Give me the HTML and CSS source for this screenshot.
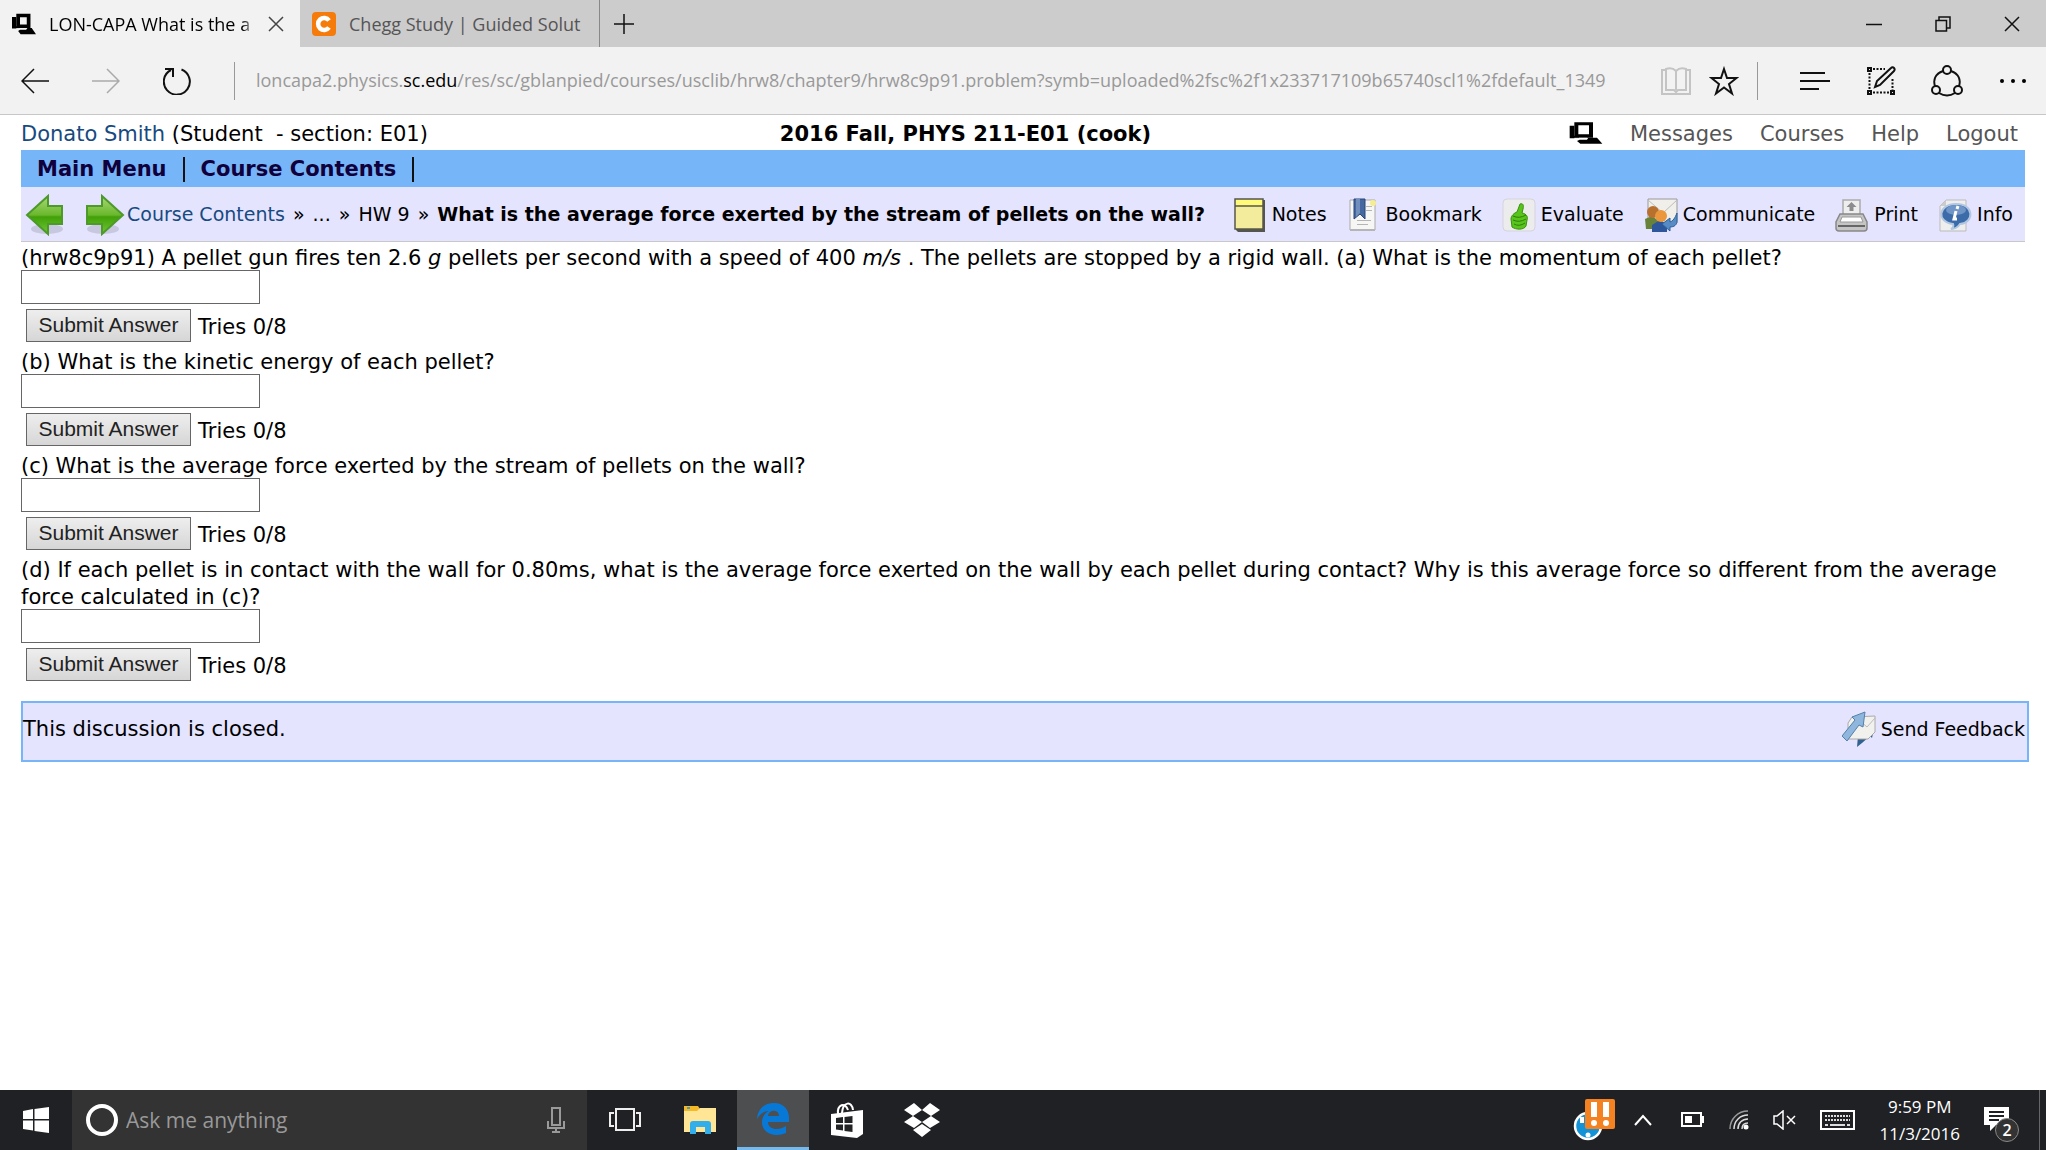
FILE: index.html
```html
<!DOCTYPE html>
<html lang="en">
<head>
<meta charset="utf-8">
<title>LON-CAPA What is the average force exerted by the stream of pellets on the wall?</title>
<link rel="stylesheet" href="styles.css">
</head>
<body>
<header class="browser">
  <div class="tabs">
    <div class="tab tab-active">
      <svg class="tab-icon" viewBox="0 0 78 70"><path fill="#000" fill-rule="evenodd" d="M14 2h46v46H14zM26 13h22v24H26z"/><path fill="#000" d="M0 12h14v30h10v8H0zM20 58l6-4h20l4-6h14l14 20H28z"/><path stroke="#f2f2f2" stroke-width="3" d="M14 50h32"/></svg>
      <span class="tab-title fade">LON-CAPA What is the a</span>
      <button class="bare" aria-label="Close tab"><svg width="16" height="16" viewBox="0 0 16 16"><path class="line thin" d="M1 1l14 14M15 1L1 15"/></svg></button>
    </div>
    <div class="tab tab-idle">
      <svg class="tab-icon" viewBox="0 0 24 24"><rect width="24" height="24" rx="4" fill="#f57c0a"/><path d="M17 8.500A6 6 0 1 0 17 15.500" fill="none" stroke="#fff" stroke-width="4.500"/></svg>
      <span class="tab-title">Chegg Study | Guided Solut</span>
    </div>
    <button class="bare new-tab" aria-label="New tab"><svg width="20" height="20" viewBox="0 0 20 20"><path class="line" d="M10 0v20M0 10h20"/></svg></button>
    <div class="window-buttons">
      <button class="bare" aria-label="Minimize"><svg width="16" height="16" viewBox="0 0 16 16"><path class="line" d="M0 8.500h16"/></svg></button>
      <button class="bare" aria-label="Restore"><svg width="16" height="16" viewBox="0 0 16 16"><path class="line" d="M1 4.500h10.500V15H1zM4 4.500V1h11v11h-3.500"/></svg></button>
      <button class="bare" aria-label="Close"><svg width="16" height="16" viewBox="0 0 16 16"><path class="line" d="M1 1l14 14M15 1L1 15"/></svg></button>
    </div>
  </div>
  <nav class="toolbar" aria-label="Browser">
    <button class="bare" aria-label="Back"><svg width="28" height="26" viewBox="0 0 28 26"><path class="line" d="M28 13H1M13 1L1 13l12 12"/></svg></button>
    <button class="bare" aria-label="Forward"><svg width="28" height="26" viewBox="0 0 28 26"><path class="line pale" d="M0 13h27M15 1l12 12-12 12"/></svg></button>
    <button class="bare" aria-label="Refresh"><svg width="28" height="28" viewBox="0 0 28 28"><path class="line bold" d="M18.500 2.500A13 13 0 1 1 8 3M2 2h8v8"/></svg></button>
    <div class="address">
      <span class="url">loncapa2.physics.<b>sc.edu</b>/res/sc/gblanpied/courses/usclib/hrw8/chapter9/hrw8c9p91.problem?symb=uploaded%2fsc%2f1x233717109b65740scl1%2fdefault_1349</span>
      <button class="bare" aria-label="Reading view"><svg width="30" height="28" viewBox="0 0 30 28"><path fill="none" stroke="#c4c4c4" stroke-width="2" d="M4 3H1v24h28V3h-3M15 4v19M15 4c-3-3-7-3-10-2v21h8l2 2 2-2h8V2c-3-1-7-1-10 2"/></svg></button>
      <button class="bare" aria-label="Add to favorites"><svg width="30" height="30" viewBox="0 0 30 30"><path class="line bold" d="M15 3l3 9h9.500l-7.500 6 3 9.500-8-6-8 6 3-9.500-7.500-6H12z"/></svg></button>
    </div>
    <button class="bare" aria-label="Hub"><svg width="30" height="20" viewBox="0 0 30 20"><path class="line bold" d="M0 2h25M0 10h30M0 18h19"/></svg></button>
    <button class="bare" aria-label="Web note"><svg width="30" height="30" viewBox="0 0 30 30"><path class="line bold" d="M2 2h3v3H2zM2 25h3v3H2zM25 25h3v3h-3z"/><path class="line bold" stroke-dasharray="2 1.500" d="M7 3h12M3.500 7v17M7 26.500h17M26.500 13v11"/><path class="line bold" d="M9 21l2-6L25 2c2-2 5 1 3 3L14 19z"/></svg></button>
    <button class="bare" aria-label="Share"><svg width="32" height="32" viewBox="0 0 32 32"><circle class="line bold" cx="16" cy="5" r="4"/><circle class="line bold" cx="5" cy="25" r="4"/><circle class="line bold" cx="27" cy="25" r="4"/><path class="line bold" d="M12 6C4 9 2 15 4 21M20 6c8 3 10 9 8 15M8 28c5 3 11 3 16 0"/></svg></button>
    <button class="bare" aria-label="More"><svg width="28" height="6" viewBox="0 0 28 6"><circle cx="3" cy="3" r="2"/><circle cx="14" cy="3" r="2"/><circle cx="25" cy="3" r="2"/></svg></button>
  </nav>
</header>

<main class="page">
  <div class="course-bar">
    <div><a class="blue" href="#">Donato Smith</a> (Student &nbsp;- section: E01)</div>
    <strong>2016 Fall, PHYS 211-E01 (cook)</strong>
    <nav class="account" aria-label="Account">
      <svg width="34" height="24" viewBox="0 0 102 72"><path fill="#000" fill-rule="evenodd" d="M16 4h56v46H16zM28 13h32v27H28z"/><path fill="#000" d="M2 14h14v30h14v8H2zM24 60l8-4h22l4-6h26l16 18H34z"/><path stroke="#fff" stroke-width="3" d="M16 52h38"/></svg>
      <a href="#">Messages</a><a href="#">Courses</a><a href="#">Help</a><a href="#">Logout</a>
    </nav>
  </div>
  <nav class="main-menu" aria-label="Main"><a href="#">Main Menu</a><a href="#">Course Contents</a></nav>
  <div class="crumb-bar">
    <button class="bare" aria-label="Previous"><svg width="40" height="42" viewBox="0 0 40 42"><defs><linearGradient id="g" x2="0" y2="1"><stop stop-color="#a8d878"/><stop offset=".5" stop-color="#6ab82c"/><stop offset=".55" stop-color="#41a008"/><stop offset="1" stop-color="#70c835"/></linearGradient></defs><ellipse cx="22" cy="35" rx="16" ry="5" fill="#9b9bb0" opacity=".4"/><path fill="url(#g)" stroke="#4d9929" stroke-width="2" d="M2 21L23 2v10h14v18H23v10z"/></svg></button>
    <button class="bare" aria-label="Next"><svg width="40" height="42" viewBox="0 0 40 42"><ellipse cx="18" cy="35" rx="16" ry="5" fill="#9b9bb0" opacity=".4"/><path fill="url(#g)" stroke="#4d9929" stroke-width="2" d="M38 21L17 2v10H2v18h15v10z"/></svg></button>
    <div class="crumbs"><a class="blue" href="#">Course Contents</a> <span>»</span> <a href="#">...</a> <span>»</span> <a href="#">HW 9</a> <span>»</span> <strong>What is the average force exerted by the stream of pellets on the wall?</strong></div>
    <nav class="tools" aria-label="Resource tools">
      <a href="#"><svg viewBox="0 0 34 34"><path fill="#55554f" d="M3 2h29v32H5l-2-2z"/><path fill="#f2ec9c" d="M3 2h27v29H3z"/><path fill="#fffb78" stroke="#55554f" stroke-width="1.500" d="M2 1h28v7H2zM2 8h28v23H2z"/><path fill="#f2ec9c" d="M3 9h26v21H3z"/></svg>Notes</a>
      <a href="#"><svg viewBox="0 0 34 34"><path fill="#f6f6f4" stroke="#aaa" d="M3 2h25v30H3z"/><path fill="#b5b5b5" d="M3 31h25v2H3zM19 8h6v1h-6zM19 12h6v1h-6zM10 22h14v1H10zM10 26h11v1H10z"/><path fill="#4668a0" stroke="#294778" d="M7 1h11v20l-5-5-6 5z"/><path fill="#718fbd" d="M9 1h4v14l-4 4z"/><circle cx="26" cy="5" r="3" fill="#f6ed93"/></svg>Bookmark</a>
      <a href="#"><svg viewBox="0 0 34 34"><rect x="1" y="1" width="32" height="32" rx="4" fill="#ececec" stroke="#d4d4dd"/><path fill="#58c51b" stroke="#3c8f10" d="M15 14l3-8c3-1 4 1 3 5l-1 4c5 1 6 4 5 7l-1 6c-2 4-10 4-14 1l-1-8c0-3 3-6 6-7z"/><path fill="none" stroke="#317e0a" d="M11 18q6 3 13-1M11 22q6 3 13-1M12 26q5 3 11-1"/></svg>Evaluate</a>
      <a href="#"><svg viewBox="0 0 34 34"><path fill="#f1efe9" stroke="#999" d="M4 1h29v24H4z"/><path fill="none" stroke="#bbb" d="M4 2l15 13L33 2"/><path fill="#69823a" d="M1 21l7-3 7 5v8H2z"/><circle cx="9" cy="14" r="6" fill="#b8702e"/><path fill="#2e579b" d="M8 27l8-5 7 4v8H8z"/><circle cx="17" cy="18" r="6" fill="#eb973d"/><path fill="#568bc5" stroke="#2c6099" d="M33 15v8c0 4-3 6-7 6v4l-8-7 8-6v4c3-1 5-4 7-9z"/></svg>Communicate</a>
      <a href="#"><svg viewBox="0 0 34 34"><path fill="#eee" stroke="#aaa" stroke-width="1.500" d="M8 2h17v18H8z"/><path fill="#8c8c8c" d="M16.500 4l5 5h-3v4h-4V9h-3z"/><path fill="#c5c5c5" stroke="#888" stroke-width="1.500" d="M5 16h23l4 8v6q0 3-3 3H4q-3 0-3-3v-6z"/><path fill="#fff" stroke="#999" d="M7 19h19l2 5H5z"/><path stroke="#666" stroke-width="2" d="M3 28h27"/></svg>Print</a>
      <a href="#"><svg viewBox="0 0 34 34"><path fill="#eee" stroke="#bbb" d="M8 2h20v31H2V8z"/><path fill="#ccc" d="M8 2v6H2z"/><path fill="#3c6ba9" stroke="#b1c6e0" stroke-width="2" d="M18 6c19 0 18 19 4 20-2 3-5 5-9 5 2-1 3-3 2-5C-2 24 0 6 18 6z"/><ellipse cx="18" cy="12" rx="10" ry="5" fill="#7095c7"/><path fill="none" stroke="#fff" stroke-width="3" d="M20 8l-1 3M18 13l-2 8h3"/></svg>Info</a>
    </nav>
  </div>

  <form class="problem" onsubmit="return false">
    <section class="part">
      <label for="a">(hrw8c9p91) A pellet gun fires ten 2.6 <i>g</i> pellets per second with a speed of 400 <i>m/s</i> . The pellets are stopped by a rigid wall. (a) What is the momentum of each pellet?</label>
      <input id="a" type="text">
      <div class="submit"><button>Submit Answer</button><span>Tries 0/8</span></div>
    </section>
    <section class="part">
      <label for="b">(b) What is the kinetic energy of each pellet?</label>
      <input id="b" type="text">
      <div class="submit"><button>Submit Answer</button><span>Tries 0/8</span></div>
    </section>
    <section class="part">
      <label for="c">(c) What is the average force exerted by the stream of pellets on the wall?</label>
      <input id="c" type="text">
      <div class="submit"><button>Submit Answer</button><span>Tries 0/8</span></div>
    </section>
    <section class="part">
      <label for="d">(d) If each pellet is in contact with the wall for 0.80ms, what is the average force exerted on the wall by each pellet during contact? Why is this average force so different from the average force calculated in (c)?</label>
      <input id="d" type="text">
      <div class="submit"><button>Submit Answer</button><span>Tries 0/8</span></div>
    </section>
  </form>

  <section class="discussion">
    <span>This discussion is closed.</span>
    <a href="#"><svg viewBox="0 0 34 36"><path fill="#33618e" d="M25 18l8-5-3 14-2-2-8 7-5 4 1-11z"/><path fill="#f1f1ee" stroke="#aaa" d="M10 6l23-1v16l-7 7H6V12z"/><path fill="none" stroke="#bbb" d="M17 9l8 7 8-9"/><path fill="#8fb6dc" stroke="#5580ab" d="M23 1l-2 15-4-2L5 30l-5-5L13 9l-3-3z"/></svg>Send Feedback</a>
  </section>
</main>

<footer class="taskbar">
  <button class="bare start" aria-label="Start"><svg width="26" height="26" viewBox="0 0 26 26"><path fill="#fff" d="M0 4l10-2v10H0zM11.500 2L26 0v12H11.500zM0 13.500h10v10L0 22zM11.500 13.500H26V26l-14.500-2z"/></svg></button>
  <div class="search">
    <svg width="34" height="34" viewBox="0 0 34 34"><circle cx="17" cy="17" r="14" fill="none" stroke="#fff" stroke-width="4"/></svg>
    <input type="text" aria-label="Search" placeholder="Ask me anything">
    <svg width="18" height="26" viewBox="0 0 18 26"><path fill="none" stroke="#9a9a9a" stroke-width="2" d="M5 1h8v17H5zM1 14v7h16v-7M9 21v4M5 25h8"/></svg>
  </div>
  <div class="apps">
    <button class="bare" aria-label="Task view"><svg width="32" height="24" viewBox="0 0 32 24"><path fill="none" stroke="#eee" stroke-width="2" d="M7 1h18v21H7zM5 5H1v13h4M27 5h4v13h-4"/></svg></button>
    <button class="bare" aria-label="File Explorer"><svg width="34" height="28" viewBox="0 0 34 28"><path fill="#f5b928" d="M1 0h14l2 3h16v5H1z"/><path fill="#ffe696" d="M1 5h13l3-3h16v24H1z"/><path fill="#32aeea" d="M7 28V18q0-3 3-3h15q3 0 3 3v10h-6v-7h-9v7z"/><path stroke="#3a9fd0" stroke-width="2" d="M4 2h3"/></svg></button>
    <button class="bare current" aria-label="Microsoft Edge"><svg width="32" height="32" viewBox="0 0 32 32"><path fill="#0878d7" d="M0 16C1 5 8 0 17 0c10 0 15 7 15 15v4H11c0 8 11 9 18 4v7c-12 5-24 0-24-11 0-5 3-9 7-11-5 0-9 3-12 8zM11 13h11c0-7-10-7-11 0z"/></svg></button>
    <button class="bare" aria-label="Store"><svg width="32" height="36" viewBox="0 0 32 36"><path fill="none" stroke="#fff" stroke-width="2" d="M7 12C6 3 14-1 17 8M11 11C12-1 21-1 22 8"/><path fill="#fff" d="M0 12l32-4v24l-6 4-26-3z"/><path fill="#222325" d="M5 16l7-1v6H5zM13.500 15l8-1v7h-8zM5 22.500h7v6l-7-1zM13.500 22.500h8V30l-8-1z"/></svg></button>
    <button class="bare" aria-label="Dropbox"><svg width="36" height="34" viewBox="0 0 36 34"><path fill="#fff" d="M10 0l8 7-9 6-9-6zM26 0l10 7-9 6-9-6zM9 13l9 6-8 6-10-6zM27 13l9 6-10 6-8-6zM18 21l9 6-9 7-9-7z"/></svg></button>
  </div>
  <div class="tray">
    <svg width="42" height="42" viewBox="0 0 42 42"><circle cx="15" cy="27" r="13" fill="#1392d6" stroke="#fff" stroke-width="2.500"/><circle cx="15" cy="36" r="2.500" fill="#fff"/><path fill="#fff" d="M7 18h4v6H7z"/><rect x="12" width="30" height="30" rx="2" fill="#f58220"/><path stroke="#fff" stroke-width="6" d="M21 3v15M33 3v15"/><circle cx="21" cy="24" r="3" fill="#fff"/><circle cx="33" cy="24" r="3" fill="#fff"/></svg>
    <svg class="chevron" width="18" height="12" viewBox="0 0 18 12"><path class="white" d="M1 11l8-9 8 9"/></svg>
    <svg width="24" height="16" viewBox="0 0 24 16"><path class="white" d="M1 1h19v13H1zM22 4v7"/><path fill="#fff" d="M4 4h7v7H4z"/></svg>
    <svg width="20" height="20" viewBox="0 0 20 20"><g fill="none" stroke="#999" stroke-width="1.500"><path d="M1 19C1 9 9 1 19 1"/><path stroke="#ddd" d="M5 19C5 11 11 5 19 5M9 19c0-6 4-10 10-10M13 19c0-4 2-6 6-6"/></g><circle cx="17" cy="17" r="2.500" fill="#fff"/></svg>
    <svg width="23" height="20" viewBox="0 0 23 20"><path fill="none" stroke="#fff" stroke-width="1.500" d="M1 6h3l6-5v18l-6-5H1zM14 6l8 8M22 6l-8 8"/></svg>
    <svg width="35" height="20" viewBox="0 0 35 20"><path class="white" d="M1 1h33v18H1z"/><path stroke="#ddd" stroke-width="2" stroke-dasharray="2 1" d="M5 6h25M5 10h25"/><path stroke="#ddd" stroke-width="2" d="M5 15h3M10 15h15M27 15h3"/></svg>
    <time class="clock"><span>9:59 PM</span><span>11/3/2016</span></time>
    <button class="bare notices" aria-label="2 notifications"><svg width="26" height="26" viewBox="0 0 26 26"><path fill="#fff" d="M0 0h25v18H12l-6 6v-6H0z"/><path stroke="#1d2024" stroke-width="2" d="M5 5h15M5 9h15M5 13h10"/></svg><span class="count">2</span></button>
  </div>
</footer>
</body>
</html>
```
FILE: styles.css
```css
* { box-sizing: border-box; }
body {
  margin: 0;
  min-height: 100vh;
  display: flex;
  flex-direction: column;
  background: #fff;
  color: #000;
  font: 21px/27px Verdana, "DejaVu Sans", sans-serif;
}
a { color: inherit; text-decoration: none; }
svg { display: block; flex: none; }
.bare {
  display: flex;
  align-items: center;
  justify-content: center;
  flex: none;
  padding: 0;
  border: 0;
  background: none;
}
.line { fill: none; stroke: #111; stroke-width: 1.500; }
.thin { stroke: #444; }
.bold { stroke-width: 2; }
.pale { stroke: #aaa; }
.white { fill: none; stroke: #fff; stroke-width: 2; }

.browser, .taskbar { font-family: "Segoe UI", "Open Sans", sans-serif; }
.browser { background: #f2f2f2; border-bottom: 1px solid #c8c8c8; }
.tabs { display: flex; height: 47px; background: #ccc; }
.tab {
  display: flex;
  align-items: center;
  gap: 13px;
  width: 300px;
  padding: 1px 16px 0 12px;
  font-size: 18px;
}
.tab-active { background: #f2f2f2; }
.tab-idle { color: #555; border-right: 1px solid #888; }
.tab-icon { width: 24px; height: 24px; }
.tab-title { flex: 1; white-space: nowrap; }
.fade { overflow: hidden; -webkit-mask: linear-gradient(to left, transparent, #000 12px); mask: linear-gradient(to left, transparent, #000 12px); }
.new-tab { width: 48px; }
.window-buttons { display: flex; margin-left: auto; }
.window-buttons button { width: 69px; }

.toolbar { display: flex; align-items: center; height: 67px; padding: 0 18px 0 21px; }
.toolbar > .bare { width: 28px; margin-right: 43px; }
.address {
  display: flex;
  align-items: center;
  flex: 1;
  min-width: 0;
  height: 38px;
  gap: 18px;
  margin-right: 42px;
  padding: 0 18px 0 21px;
  border: solid #999;
  border-width: 0 1px;
}
.address ~ .bare { width: 30px; margin-right: 36px; }
.address ~ .bare:last-child { margin-right: 0; }
.url { flex: 1; overflow: hidden; white-space: nowrap; font-size: 18px; color: #999; }
.url b { font-weight: 400; color: #000; }

.page { flex: 1; padding: 0 21px; }
.course-bar {
  display: grid;
  grid-template-columns: 38% auto 1fr;
  align-items: center;
  height: 35px;
  padding: 3px 7px 0 0;
}
.account { display: flex; justify-content: flex-end; gap: 27px; color: #555; }
.blue { color: #174a80; }
.main-menu { display: flex; align-items: center; height: 37px; padding-top: 1px; background: #76b5f7; }
.main-menu a {
  padding: 0 16px;
  border-right: 2px solid #111;
  font-weight: 700;
  line-height: 25px;
  color: #10003c;
}
.crumb-bar {
  display: flex;
  align-items: center;
  gap: 20px;
  height: 55px;
  padding: 1px 12px 0 4px;
  background: #e4e4ff;
  border-bottom: 1px solid #c8c8c8;
  font-size: 19px;
  white-space: nowrap;
}
.crumbs { margin-left: -18px; }
.crumbs span { margin: 0 2px; }
.tools { display: flex; gap: 20px; margin-left: auto; }
.tools a { display: flex; align-items: center; gap: 5px; }
.tools svg { width: 34px; height: 34px; }

.problem { padding: 1px 0 0; }
.part { display: flex; flex-direction: column; align-items: flex-start; margin-bottom: 5px; }
.part label { padding-top: 2px; margin-bottom: -2px; }
.part > input {
  width: 239px;
  height: 34px;
  border: 1px solid #666;
  padding: 2px 4px;
  font: inherit;
}
.submit { display: flex; align-items: center; gap: 7px; margin: 5px 0 0 5px; }
.submit span { padding-top: 3px; }
.submit button {
  width: 165px;
  height: 33px;
  padding: 0 0 2px;
  border: 1px solid #666;
  background: linear-gradient(#eee, #d6d6d6);
  color: #222;
  font: 21px/24px Arial, "Liberation Sans", sans-serif;
}
.discussion {
  display: flex;
  align-items: center;
  justify-content: space-between;
  height: 61px;
  margin: 20px -4px 0 0;
  padding: 0 2px 5px 0;
  border: 2px solid #76b5f7;
  background: #e4e4ff;
}
.discussion a { display: flex; align-items: center; gap: 5px; font-size: 19px; }
.discussion svg { width: 34px; height: 36px; }

.taskbar { display: flex; height: 60px; background: #202124; color: #fff; }
.start { width: 72px; }
.search { display: flex; align-items: center; width: 515px; gap: 7px; padding: 0 22px 0 13px; background: #333; }
.search input { flex: 1; min-width: 0; padding: 0; border: 0; background: none; color: #fff; font: inherit; }
.search input::placeholder { color: #999; opacity: 1; }
.apps { display: flex; }
.apps button { width: 75px; }
.apps .current { width: 72px; background: #4d4e50; border-bottom: 3px solid #76b9ed; }
.tray { display: flex; align-items: center; gap: 24px; margin-left: auto; padding-right: 6px; }
.chevron { margin: 0 5px 0 -5px; }
.clock { display: flex; flex-direction: column; align-items: center; font-size: 17px; }
.notices { position: relative; justify-content: flex-start; width: 56px; height: 60px; border-right: 1px solid #666; color: #fff; }
.count {
  position: absolute;
  left: 11px;
  top: 28px;
  width: 24px;
  height: 24px;
  border: 1px solid #888;
  border-radius: 50%;
  background: #333;
  font: 600 16px/22px "Open Sans", sans-serif;
}
```
